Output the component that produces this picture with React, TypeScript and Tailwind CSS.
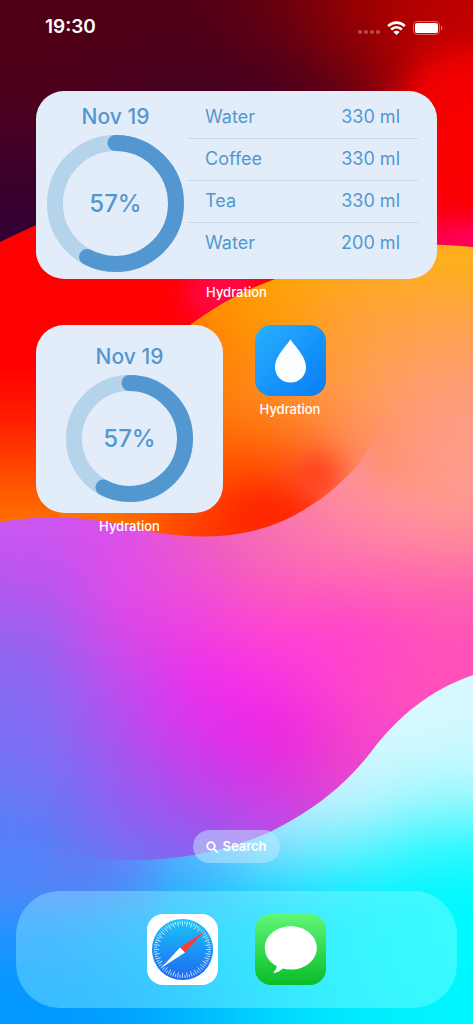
import { useId } from "react";

const DRINKS = [
  { name: "Water", amount: "330 ml" },
  { name: "Coffee", amount: "330 ml" },
  { name: "Tea", amount: "330 ml" },
  { name: "Water", amount: "200 ml" },
];

/* Colour meshes: one row of six colours per band of the wallpaper. */
const NIGHT = [
  ["#500016", "#500016", "#500016", "#640010", "#980000", "#bc0000"],
  ["#500018", "#4c001a", "#4a001e", "#520018", "#7c0008", "#cc0000"],
  ["#4a001e", "#460020", "#440024", "#440024", "#580018", "#f40000"],
  ["#420026", "#400028", "#400028", "#400028", "#900010", "#ff0000"],
  ["#38002e", "#38002e", "#38002e", "#400028", "#e00010", "#ff0008"],
  ["#300034", "#300034", "#300034", "#500028", "#ff0050", "#ff0060"],
];

const SUN = [
  ["#ff0000", "#ff5000", "#ff8c00", "#ffa600", "#ffac18", "#ffb01a"],
  ["#ff0000", "#ff5000", "#ff8c00", "#ffa008", "#ffa038", "#ffa640"],
  ["#ff1000", "#ff5000", "#ff7c00", "#ff9210", "#ffa044", "#ffa060"],
  ["#ff2800", "#ff6000", "#ff7c00", "#ff8c2c", "#ff9c54", "#ff9c7c"],
  ["#ff4800", "#ff6800", "#ff6600", "#ff6c08", "#ff8c58", "#ff9c88"],
  ["#ff6c00", "#ff7800", "#ff4a00", "#ff3000", "#ff8870", "#ff9c8c"],
  ["#ff7800", "#ff7000", "#ff3800", "#ff2600", "#ff8070", "#ff9890"],
];

const BLOOM = [
  ["#c85cf0", "#dc50f0", "#f068b8", "#fb7ca8", "#ff9490", "#ff9c90"],
  ["#ca56f0", "#dc4ced", "#ee5cc0", "#f872ae", "#ff84a8", "#ff9098"],
  ["#b856ee", "#e04cea", "#ee50d4", "#fc60b8", "#ff66b4", "#ff68ac"],
  ["#9c62ee", "#da46e8", "#f040e0", "#ff44d0", "#ff42cc", "#ff54b8"],
  ["#8868f2", "#c04eee", "#ee2cec", "#fc34e2", "#fe48c8", "#ff50b8"],
  ["#806ef4", "#b050ee", "#dc34ec", "#ee22e2", "#f444cc", "#ff50c0"],
  ["#7076f6", "#985cf0", "#c040ec", "#dc34e0", "#e848c8", "#f04cc8"],
  ["#587ef8", "#8466f0", "#9858ee", "#bc4ce8", "#d048e0", "#d048e0"],
  ["#4c88f8", "#607cf6", "#7c6af2", "#a058ee", "#b050e8", "#b050e8"],
];

const SEA = [
  ["#b8e8ff", "#b8e8ff", "#c8f0ff", "#d4f8ff", "#d8f9ff", "#d8f8ff"],
  ["#b8e8ff", "#b8e8ff", "#c8f0ff", "#ccf2ff", "#d4f8ff", "#ccf9ff"],
  ["#6090fa", "#70a0fa", "#a8d8ff", "#c8eaff", "#c0f2ff", "#98f8ff"],
  ["#5888f8", "#5890fa", "#54b0ff", "#80e0ff", "#60f4ff", "#28f8ff"],
  ["#3890ff", "#34a0fc", "#24bcff", "#18d8ff", "#08ecff", "#00f8ff"],
  ["#1894ff", "#10a4ff", "#00c4ff", "#00e0ff", "#00f0ff", "#00f8ff"],
  ["#0098ff", "#00a0ff", "#00baff", "#00d8ff", "#00ecff", "#00f4ff"],
];

function Mesh({ rows, top, band }: { rows: string[][]; top: number; band: number }) {
  const cell = 79;
  return (
    <g filter="url(#soft)">
      {rows.map((row, r) =>
        row.map((color, c) => {
          const left = c === 0 ? -100 : c * cell;
          const right = c === row.length - 1 ? 580 : (c + 1) * cell + 1;
          const y = top + r * band - (r === 0 ? 100 : 0);
          const end = top + (r + 1) * band + (r === rows.length - 1 ? 100 : 1);
          return <rect key={`${r}-${c}`} x={left} y={y} width={right - left} height={end - y} fill={color} />;
        }),
      )}
    </g>
  );
}

function Wallpaper() {
  return (
    <svg
      className="absolute inset-0 h-full w-full"
      viewBox="0 0 473 1024"
      preserveAspectRatio="none"
      aria-hidden="true"
    >
      <defs>
        <filter id="soft" filterUnits="userSpaceOnUse" x="-100" y="-120" width="680" height="1300" colorInterpolationFilters="sRGB">
          <feGaussianBlur stdDeviation="34 24" />
        </filter>
        <filter id="glow" x="-100%" y="-100%" width="300%" height="300%" colorInterpolationFilters="sRGB">
          <feGaussianBlur stdDeviation="14" />
        </filter>
        <linearGradient id="ember" x1="0" y1="365" x2="0" y2="530" gradientUnits="userSpaceOnUse">
          <stop offset="0" stopColor="#ff0000" />
          <stop offset="0.35" stopColor="#ff2000" />
          <stop offset="0.75" stopColor="#ff5800" />
          <stop offset="1" stopColor="#ff7400" />
        </linearGradient>
        <linearGradient id="edgeFade" x1="65" y1="0" x2="170" y2="0" gradientUnits="userSpaceOnUse">
          <stop offset="0" stopColor="#000" />
          <stop offset="1" stopColor="#fff" />
        </linearGradient>
        <mask id="seaMask" maskUnits="userSpaceOnUse" x="0" y="600" width="473" height="424">
          <rect y="600" width="473" height="424" fill="url(#edgeFade)" />
          <rect x="-60" y="905" width="300" height="200" fill="#fff" filter="url(#glow)" />
        </mask>
        <mask id="bloomMask" maskUnits="userSpaceOnUse" x="0" y="380" width="473" height="644">
          <rect y="380" width="473" height="644" fill="#fff" />
          <path d="M352 380H520V490L430 495L375 478Z" fill="#000" filter="url(#glow)" />
        </mask>
        <clipPath id="redClip">
          <path d="M0 242C60 212 120 190 200 180L400 270V560H0Z" />
        </clipPath>
        <clipPath id="sunClip">
          <path d="M60 490C90 420 140 358 190 325C220 303 250 288 275 279C330 253 390 238 473 247V600H60Z" />
        </clipPath>
        <clipPath id="bloomClip">
          <path d="M0 522C50 513 98 517 148 531C200 541 255 539 300 512C325 498 343 482 360 462L400 400H473V1024H0Z" />
        </clipPath>
        <clipPath id="seaClip">
          <path d="M473 675C430 690 398 716 371 752C342 789 310 812 270 832C205 861 130 866 80 854L0 830V1024H473Z" />
        </clipPath>
      </defs>

      <Mesh rows={NIGHT} top={0} band={43} />
      <path d="M400 110L425 60L520 40V230H400Z" fill="#f80000" fillOpacity="0.8" filter="url(#glow)" />

      <g clipPath="url(#redClip)">
        <rect width="473" height="600" fill="url(#ember)" />
        <ellipse cx="222" cy="294" rx="38" ry="30" fill="#ff0848" filter="url(#glow)" />
      </g>
      <ellipse cx="475" cy="240" rx="50" ry="14" fill="#ff0058" filter="url(#glow)" />

      <g clipPath="url(#sunClip)">
        <Mesh rows={SUN} top={240} band={45} />
        <ellipse cx="275" cy="515" rx="48" ry="20" fill="#ff2600" filter="url(#glow)" />
        <ellipse cx="318" cy="474" rx="22" ry="18" fill="#ff3818" filter="url(#glow)" />
      </g>

      <g mask="url(#bloomMask)">
        <g clipPath="url(#bloomClip)">
          <Mesh rows={BLOOM} top={455} band={50} />
        </g>
      </g>

      <g mask="url(#seaMask)">
        <g clipPath="url(#seaClip)">
          <Mesh rows={SEA} top={675} band={50} />
        </g>
      </g>
    </svg>
  );
}

function Ring({ percent, className, size }: { percent: number; className: string; size: number }) {
  const stroke = 16;
  const r = (size - stroke) / 2;
  const turn = 2 * Math.PI * r;
  return (
    <div className={"relative flex items-center justify-center " + className}>
      <svg className="absolute inset-0 h-full w-full -rotate-90" viewBox={`0 0 ${size} ${size}`} aria-hidden="true">
        <circle cx={size / 2} cy={size / 2} r={r} fill="none" stroke="#b5d3eb" strokeWidth={stroke} />
        <circle
          cx={size / 2}
          cy={size / 2}
          r={r}
          fill="none"
          stroke="#5397d1"
          strokeWidth={stroke}
          strokeLinecap="round"
          strokeDasharray={`${(turn * percent) / 100} ${turn}`}
        />
      </svg>
      <span className="relative text-2xl font-medium">{Math.floor(percent)}%</span>
    </div>
  );
}

function Label() {
  return <p className="mt-[3px] text-center text-[13px] leading-5 font-medium text-white">Hydration</p>;
}

function StatusBar() {
  return (
    <header className="flex h-[55px] items-center justify-between pr-[30px] pl-[45px] text-white">
      <time className="text-[19px] font-semibold">19:30</time>
      <div className="flex items-center gap-[7px]">
        <svg className="mt-2 h-1 w-[22px]" viewBox="0 0 22 4" fill="#fff" fillOpacity="0.3" aria-hidden="true">
          <circle cx="2" cy="2" r="2" />
          <circle cx="8" cy="2" r="2" />
          <circle cx="14" cy="2" r="2" />
          <circle cx="20" cy="2" r="2" />
        </svg>
        <svg className="h-[14px] w-[19px]" viewBox="0 0 19 14" fill="none" stroke="#fff" strokeWidth="2.7" role="img" aria-label="Wi-Fi">
          <path d="M1.2 5.1C5.8 .4 13.2 .4 17.8 5.1" />
          <path d="M4.2 8.5C7.2 5.5 11.8 5.5 14.8 8.5" />
          <path d="M9.5 14L6.4 10.9C8.1 9.2 10.9 9.2 12.6 10.9Z" fill="#fff" stroke="none" />
        </svg>
        <svg className="h-[14px] w-[30px]" viewBox="0 0 30 14" role="img" aria-label="Battery full">
          <rect x="0.5" y="0.5" width="26" height="13" rx="4" fill="none" stroke="#fff" strokeOpacity="0.4" />
          <rect x="2" y="2" width="23" height="10" rx="2.6" fill="#fff" />
          <path d="M28 4.8C29.8 5.4 29.8 8.6 28 9.2Z" fill="#fff" fillOpacity="0.5" />
        </svg>
      </div>
    </header>
  );
}

function DropIcon() {
  const id = useId();
  return (
    <svg className="h-[71px] w-[71px] rounded-2xl" viewBox="0 0 71 71" aria-hidden="true">
      <defs>
        <linearGradient id={id} x1="0" y1="0" x2="1" y2="1">
          <stop offset="0" stopColor="#28b0ff" />
          <stop offset="1" stopColor="#087cf4" />
        </linearGradient>
      </defs>
      <rect width="71" height="71" fill={`url(#${id})`} />
      <path d="M35.5 14C37 18.6 51 30 51 42.2C51 51 44.2 57.5 35.5 57.5S20 51 20 42.2C20 30 34 18.6 35.5 14Z" fill="#fafeff" />
    </svg>
  );
}

function SafariIcon() {
  const ticks = Array.from({ length: 72 }, (_, i) => i);
  return (
    <svg className="h-[71px] w-[71px] rounded-2xl" viewBox="0 0 71 71" aria-hidden="true">
      <defs>
        <linearGradient id="compass" x1="0" y1="0" x2="0" y2="1">
          <stop offset="0" stopColor="#1cc4f8" />
          <stop offset="1" stopColor="#1e68f0" />
        </linearGradient>
      </defs>
      <rect width="71" height="71" fill="#fff" />
      <circle cx="35.5" cy="35.5" r="30.6" fill="url(#compass)" />
      <g stroke="#fff" strokeWidth="0.8" strokeOpacity="0.85">
        {ticks.map((i) => (
          <path key={i} d={i % 2 ? "M35.5 7V10" : "M35.5 7V12.2"} transform={`rotate(${i * 5} 35.5 35.5)`} />
        ))}
      </g>
      <path d="M57.2 17.6L38 38.4L33 33.4Z" fill="#ff3b30" />
      <path d="M14.2 54L33 33.4L38 38.4Z" fill="#fff" />
    </svg>
  );
}

function MessagesIcon() {
  return (
    <svg className="h-[71px] w-[71px] rounded-2xl" viewBox="0 0 71 71" aria-hidden="true">
      <defs>
        <linearGradient id="leaf" x1="0" y1="0" x2="0" y2="1">
          <stop offset="0" stopColor="#5ff777" />
          <stop offset="1" stopColor="#0abc28" />
        </linearGradient>
      </defs>
      <rect width="71" height="71" fill="url(#leaf)" />
      <path
        d="M35.8 12.2C50.2 12.2 61.8 21.9 61.8 33.9S50.2 55.6 35.8 55.6C33 55.6 30.4 55.3 27.8 54.6C25.6 56.8 22.3 58.7 19.2 58.9C18.4 58.9 18.4 58.2 18.9 57.8C20.8 56.2 21.6 54.2 21.7 52.1C14.4 48.2 9.8 41.5 9.8 33.9C9.8 21.9 21.4 12.2 35.8 12.2Z"
        fill="#fff"
      />
    </svg>
  );
}

export default function App() {
  return (
    <div className="relative flex min-h-screen flex-col overflow-hidden font-[Inter,'Liberation_Sans',sans-serif]">
      <Wallpaper />
      <div className="relative flex flex-1 flex-col">
        <StatusBar />
        <main className="flex flex-1 flex-col px-9 pt-9">
          <div className="grid grid-cols-4 gap-x-[27px] gap-y-[23px]">
            <section className="col-span-4" aria-label="Hydration today">
              <div className="flex h-[188px] gap-[3px] rounded-[28px] bg-[#e3edf9] pr-[19px] pl-[11px] text-[#5397d1]">
                <div className="flex flex-col items-center gap-1 pt-3">
                  <h2 className="text-[21px] leading-7 font-medium">Nov 19</h2>
                  <Ring percent={57.7} size={137} className="h-[137px] w-[137px]" />
                </div>
                <table className="mt-[5px] flex-1 self-start text-lg">
                  <tbody>
                    {DRINKS.map((drink, i) => (
                      <tr key={i} className="h-[42px] border-b border-[#cbd8e6] last:border-b-0">
                        <th scope="row" className="pl-[18px] text-left font-normal">
                          {drink.name}
                        </th>
                        <td className="pr-[18px] text-right">{drink.amount}</td>
                      </tr>
                    ))}
                  </tbody>
                </table>
              </div>
              <Label />
            </section>
            <section className="col-span-2" aria-label="Hydration progress">
              <div className="flex h-[188px] flex-col items-center gap-1 rounded-[28px] bg-[#e3edf9] pt-[18px] text-[#5397d1]">
                <h2 className="text-[21px] leading-7 font-medium">Nov 19</h2>
                <Ring percent={57.7} size={127} className="h-[127px] w-[127px]" />
              </div>
              <Label />
            </section>
            <button type="button" className="flex flex-col items-center self-start">
              <DropIcon />
              <Label />
            </button>
          </div>
          <button
            type="button"
            className="mt-auto mb-7 flex h-[33px] items-center gap-1 self-center rounded-full bg-[#c4ecff]/50 px-[13px] text-[13px] font-semibold text-white"
          >
            <svg className="h-3 w-3" viewBox="0 0 12 12" fill="none" stroke="#fff" strokeWidth="1.8" strokeLinecap="round" aria-hidden="true">
              <circle cx="5" cy="5" r="3.8" />
              <path d="M8 8L11 11" />
            </svg>
            Search
          </button>
        </main>
        <nav
          aria-label="Dock"
          className="mx-4 mb-4 flex h-[117px] items-center justify-center gap-[37px] rounded-[44px] bg-[#a0ffff]/35"
        >
          <a href="#safari" aria-label="Safari">
            <SafariIcon />
          </a>
          <a href="#messages" aria-label="Messages">
            <MessagesIcon />
          </a>
        </nav>
      </div>
    </div>
  );
}
